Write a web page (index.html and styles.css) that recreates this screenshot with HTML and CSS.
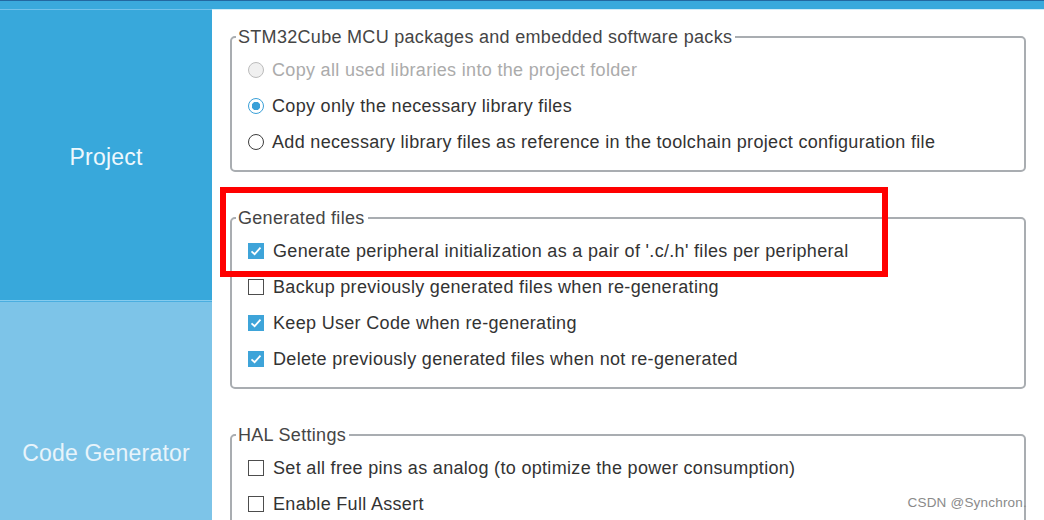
FILE: index.html
```html
<!DOCTYPE html>
<html lang="en">
<head>
    <meta charset="UTF-8">
    <title>Project Manager</title>
    <link rel="stylesheet" href="styles.css">
</head>
<body>

<div class="window">
    <div class="topbar"></div>
    <div class="main">
        <aside class="sidebar">
            <div class="tab tab-active">Project</div>
            <div class="tab tab-code">Code Generator</div>
        </aside>

        <section class="content">
            <fieldset class="group">
                <legend>STM32Cube MCU packages and embedded software packs</legend>
                <div class="row disabled"><span class="radio off-disabled"></span>Copy all used libraries into the project folder</div>
                <div class="row"><span class="radio on"></span>Copy only the necessary library files</div>
                <div class="row"><span class="radio"></span>Add necessary library files as reference in the toolchain project configuration file</div>
            </fieldset>

            <fieldset class="group">
                <legend>Generated files</legend>
                <div class="row"><span class="check on"></span>Generate peripheral initialization as a pair of '.c/.h' files per peripheral</div>
                <div class="row"><span class="check"></span>Backup previously generated files when re-generating</div>
                <div class="row"><span class="check on"></span>Keep User Code when re-generating</div>
                <div class="row"><span class="check on"></span>Delete previously generated files when not re-generated</div>
            </fieldset>

            <fieldset class="group">
                <legend>HAL Settings</legend>
                <div class="row"><span class="check"></span>Set all free pins as analog (to optimize the power consumption)</div>
                <div class="row"><span class="check"></span>Enable Full Assert</div>
            </fieldset>
        </section>
    </div>

    <div class="highlight"></div>
    <div class="watermark">CSDN @Synchron.</div>
</div>

</body>
</html>
```

FILE: styles.css
```css
html, body {
    margin: 0;
    padding: 0;
    background: #fff;
    overflow: hidden;
}
.window {
    position: relative;
    width: 1044px;
    height: 520px;
    overflow: hidden;
    font-family: "Liberation Sans", Arial, sans-serif;
}
.topbar {
    height: 8px;
    background-color: #3aa9dc;
    border-top: 1px solid #2468a0;
}
.main {
    display: flex;
}
.sidebar {
    width: 212px;
    flex-shrink: 0;
    display: flex;
    flex-direction: column;
    border-top: 1px solid #72c1ea;
}
.tab {
    box-sizing: border-box;
    display: flex;
    justify-content: center;
    align-items: center;
    font-size: 23px;
    letter-spacing: 0.2px;
    color: #eef8fd;
}
.tab-active {
    height: 291px;
    padding-top: 4px;
    background-color: #38a8db;
    border-bottom: 1px solid #86ccef;
}
.tab-code {
    height: 301px;
    padding-top: 2px;
    background-color: #7dc4e8;
    border-top: 1px solid #4aaee0;
    color: #e8f4fb;
}
.content {
    flex: 1;
    padding: 17px 18px 0 18px;
    border-top: 1px solid #d3ecf8;
}
.group {
    border: 2px solid #a9adb1;
    border-radius: 5px;
    margin: 0 0 36px 0;
    padding: 5px 16px 10px 16px;
}
legend {
    font-size: 18px;
    line-height: 20px;
    letter-spacing: 0.3px;
    color: #454545;
    padding: 0 3px 0 2px;
    margin-left: -12px;
}
.row {
    display: flex;
    align-items: center;
    height: 36px;
    font-size: 18px;
    letter-spacing: 0.32px;
    color: #333;
    white-space: nowrap;
}
.row.disabled {
    color: #ababab;
}
.check, .radio {
    width: 16px;
    height: 16px;
    box-sizing: border-box;
    margin-right: 9px;
    flex-shrink: 0;
}
.check {
    border: 1px solid #4d4d4d;
    background: #fff;
}
.check.on {
    border: none;
    background: #3ea4d9 url("data:image/svg+xml;utf8,<svg xmlns='http://www.w3.org/2000/svg' viewBox='0 0 16 16'><path d='M3.5 8.3 L6.6 11.2 L12.5 4.6' fill='none' stroke='white' stroke-width='1.8'/></svg>") no-repeat center;
}
.radio {
    border-radius: 50%;
    border: 1px solid #3d3d3d;
    background: #fff;
    margin-right: 8px;
}
.radio.on {
    border: 1.5px solid #3aa0d8;
    background: radial-gradient(circle, #3aa0d8 0 4px, #fff 4.5px);
}
.radio.off-disabled {
    border: 1px solid #bcbcbc;
    background: #f0f0f0;
}
.highlight {
    position: absolute;
    left: 220px;
    top: 187px;
    width: 656px;
    height: 78px;
    border: 6px solid #ff0000;
}
.watermark {
    position: absolute;
    right: 17px;
    top: 495px;
    font-size: 13.5px;
    letter-spacing: 0.2px;
    color: #8a8a8a;
}
```
